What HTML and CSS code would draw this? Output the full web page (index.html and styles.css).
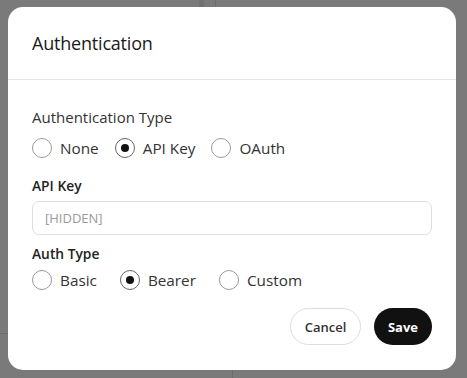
FILE: index.html
```html
<!DOCTYPE html>
<html lang="en">
<head>
    <meta charset="UTF-8">
    <meta name="viewport" content="width=device-width, initial-scale=1.0">
    <title>Authentication</title>
    <link rel="stylesheet" href="styles.css">
</head>
<body>

<!-- dimmed app behind the dialog -->
<div class="backdrop">
    <div class="bg-line bg-line-top"></div>
    <div class="bg-line bg-line-bottom"></div>
    <div class="bg-rule"></div>
</div>

<div class="dialog">
    <div class="dialog-header">
        <h2>Authentication</h2>
    </div>

    <div class="dialog-body">
        <div class="section-title">Authentication Type</div>
        <div class="radio-row">
            <label class="radio"><span class="dot"></span>None</label>
            <label class="radio checked"><span class="dot"></span>API Key</label>
            <label class="radio"><span class="dot"></span>OAuth</label>
        </div>

        <div class="field-label">API Key</div>
        <input type="text" class="text-input" placeholder="[HIDDEN]">

        <div class="field-label field-label-tight">Auth Type</div>
        <div class="radio-row radio-row-wide">
            <label class="radio"><span class="dot"></span>Basic</label>
            <label class="radio checked"><span class="dot"></span>Bearer</label>
            <label class="radio"><span class="dot"></span>Custom</label>
        </div>

        <div class="actions">
            <button class="btn btn-cancel">Cancel</button>
            <button class="btn btn-save">Save</button>
        </div>
    </div>
</div>

</body>
</html>
```

FILE: styles.css
```css
/* page */
body {
    margin: 0;
    width: 467px;
    height: 378px;
    background-color: #7a7a7a;
    font-family: "Open Sans", "Noto Sans", sans-serif;
    color: #222222;
    overflow: hidden;
    position: relative;
}

/* faint lines of the app under the overlay */
.backdrop {
    position: absolute;
    inset: 0;
}

.bg-line {
    position: absolute;
    width: 1px;
    background-color: #6c6c6c;
}

.bg-line-top {
    left: 215px;
    top: 0;
    height: 8px;
    box-shadow: -14px 0 0 2px #707070;
}

.bg-line-bottom {
    left: 232px;
    top: 370px;
    height: 8px;
}

.bg-rule {
    position: absolute;
    left: 0;
    top: 333px;
    width: 8px;
    height: 1px;
    background-color: #6c6c6c;
}

/* dialog box */
.dialog {
    position: absolute;
    left: 8px;
    top: 7px;
    width: 448px;
    height: 363px;
    background-color: #ffffff;
    border-radius: 15px;
    box-sizing: border-box;
}

.dialog-header {
    height: 72px;
    padding: 0 24px;
    display: flex;
    align-items: center;
    border-bottom: 1px solid #e4e4e4;
}

.dialog-header h2 {
    margin: 0;
    font-size: 18px;
    font-weight: 500;
    color: #1a1a1a;
    letter-spacing: -0.2px;
}

.dialog-body {
    padding: 27px 24px 0;
}

.section-title {
    font-size: 15px;
    line-height: 20px;
    color: #333333;
    margin-bottom: 10px;
}

.radio-row {
    display: flex;
    gap: 16px;
    margin-bottom: 18px;
}

.radio-row-wide {
    gap: 23px;
    margin-bottom: 0;
}

.radio {
    display: flex;
    align-items: center;
    gap: 8px;
    font-size: 15.3px;
    line-height: 22px;
    color: #333333;
    height: 22px;
}

.dot {
    width: 20px;
    height: 20px;
    box-sizing: border-box;
    border: 1px solid #9a9a9a;
    border-radius: 50%;
    display: flex;
    align-items: center;
    justify-content: center;
}

.radio.checked .dot {
    border-color: #666666;
}

.radio.checked .dot::after {
    content: "";
    width: 8px;
    height: 8px;
    border-radius: 50%;
    background-color: #111111;
}

.field-label {
    font-size: 13.8px;
    line-height: 18px;
    font-weight: 600;
    color: #222222;
    margin-bottom: 6px;
}

.field-label-tight {
    margin-top: 10px;
}

.text-input {
    display: block;
    width: 100%;
    height: 34px;
    box-sizing: border-box;
    border: 1px solid #dddddd;
    border-radius: 7px;
    padding: 0 12px;
    font-family: inherit;
    font-size: 13px;
    color: #333333;
}

.text-input::placeholder {
    color: #9a9a9a;
}

.actions {
    display: flex;
    justify-content: flex-end;
    gap: 13px;
    margin-top: 17px;
}

.btn {
    height: 37px;
    border-radius: 19px;
    font-family: inherit;
    font-size: 13px;
    font-weight: 600;
    cursor: pointer;
}

.btn-cancel {
    width: 71px;
    background-color: #ffffff;
    color: #333333;
    border: 1px solid #dddddd;
}

.btn-save {
    width: 58px;
    background-color: #111111;
    color: #ffffff;
    border: none;
    font-weight: 700;
}
```
